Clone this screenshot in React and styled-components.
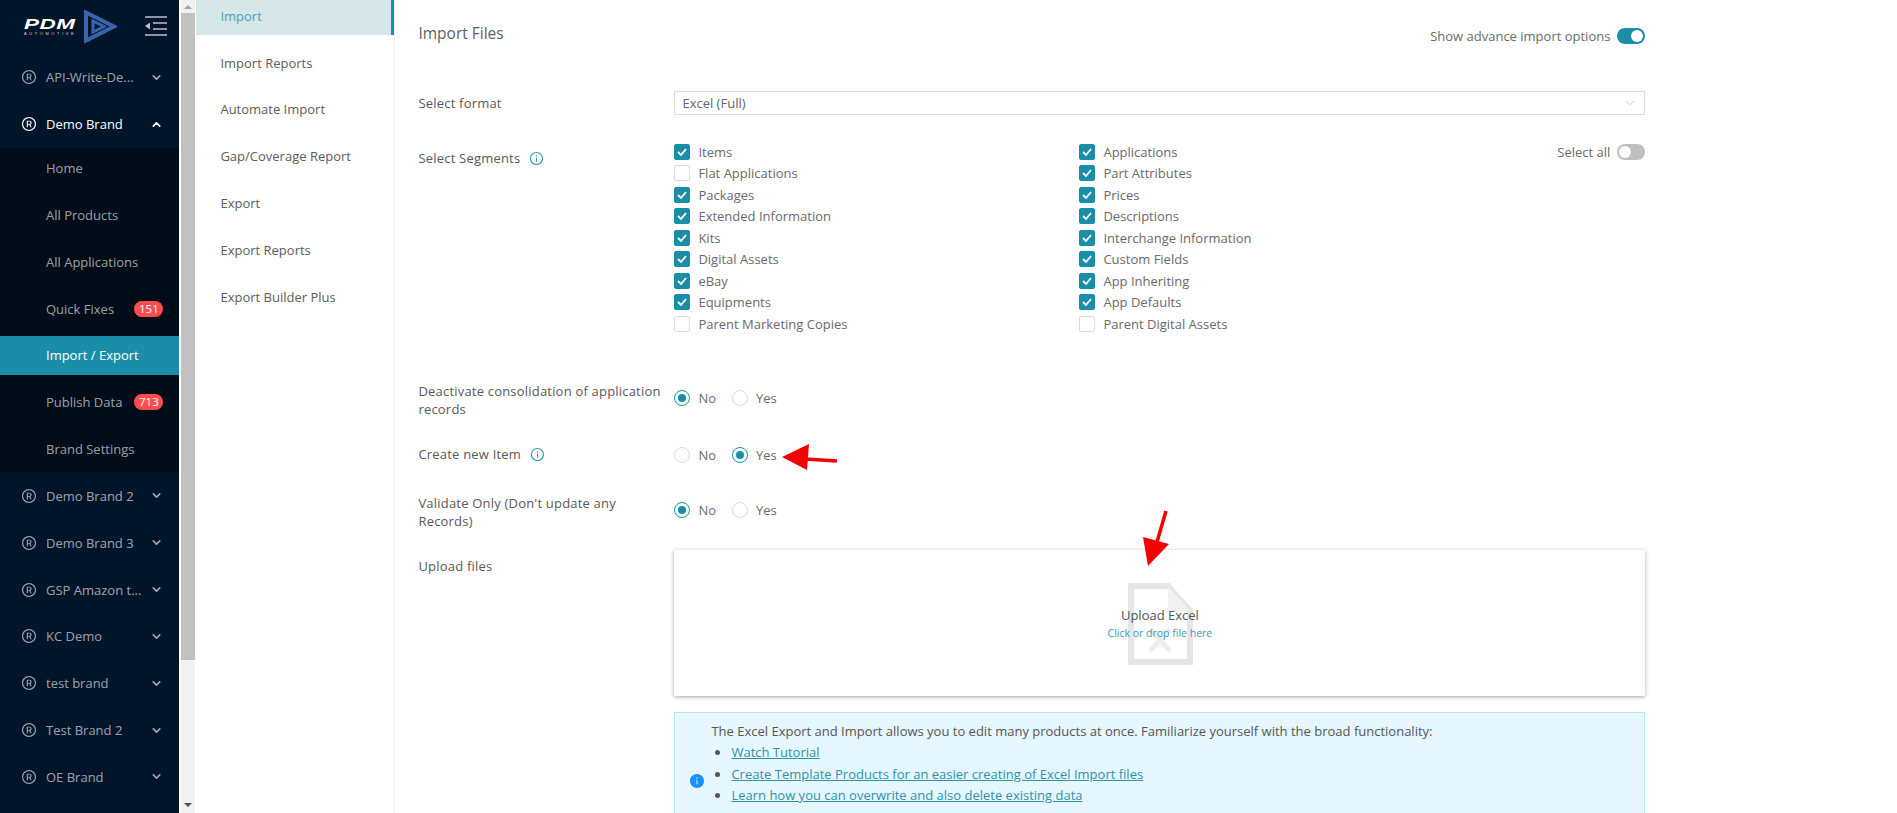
import React from 'react';
import styled, { createGlobalStyle } from 'styled-components';
import { AiOutlineTrademark, AiOutlineInfoCircle, AiFillInfoCircle } from 'react-icons/ai';
import { ChevronDown, ChevronUp } from 'lucide-react';

const TEAL = '#1a8ea8';

const brandsBefore = ['API-Write-De...'];
const brandsAfter = ['Demo Brand 2', 'Demo Brand 3', 'GSP Amazon t...', 'KC Demo', 'test brand', 'Test Brand 2', 'OE Brand'];
const subItems = [
  { label: 'Home' },
  { label: 'All Products' },
  { label: 'All Applications' },
  { label: 'Quick Fixes', badge: 151 },
  { label: 'Import / Export', active: true },
  { label: 'Publish Data', badge: 713 },
  { label: 'Brand Settings' },
];
const sections = ['Import', 'Import Reports', 'Automate Import', 'Gap/Coverage Report', 'Export', 'Export Reports', 'Export Builder Plus'];
const segments = [
  ['Items', true], ['Applications', true],
  ['Flat Applications', false], ['Part Attributes', true],
  ['Packages', true], ['Prices', true],
  ['Extended Information', true], ['Descriptions', true],
  ['Kits', true], ['Interchange Information', true],
  ['Digital Assets', true], ['Custom Fields', true],
  ['eBay', true], ['App Inheriting', true],
  ['Equipments', true], ['App Defaults', true],
  ['Parent Marketing Copies', false], ['Parent Digital Assets', false],
];

function BrandRow({ name, open }) {
  return (
    <BrandItem $open={open}>
      <AiOutlineTrademark size={16} />
      <BrandName>{name}</BrandName>
      {open ? <ChevronUp size={13} strokeWidth={3} /> : <ChevronDown size={13} strokeWidth={3} />}
    </BrandItem>
  );
}

function Check({ on, label }) {
  return (
    <CheckRow>
      <CheckBox $on={on}>
        {on && (
          <svg width="10" height="8" viewBox="0 0 10 8">
            <path d="M1 4l3 3 5-6" fill="none" stroke="#fff" strokeWidth="1.8" />
          </svg>
        )}
      </CheckBox>
      {label}
    </CheckRow>
  );
}

function YesNo({ value, top }) {
  return (
    <RadioGroup $top={top}>
      <RadioLabel>
        <Radio $on={value === 'No'} />
        No
      </RadioLabel>
      <RadioLabel>
        <Radio $on={value === 'Yes'} />
        Yes
      </RadioLabel>
    </RadioGroup>
  );
}

export default function App() {
  return (
    <Page>
      <GlobalStyle />
      <Sidebar>
        <LogoBar>
          <LogoWord>
            <LogoName>PDM</LogoName>
            <LogoSub>AUTOMOTIVE</LogoSub>
          </LogoWord>
          <svg width="33" height="33" viewBox="0 0 33 33">
            <path d="M2 2.5l28 14L2 30.5z" fill="none" stroke="#3a63ad" strokeWidth="4" />
            <path d="M9 11l11 5.5L9 22z" fill="none" stroke="#3a63ad" strokeWidth="3" />
            <path d="M2 31l12-6" stroke="#3a63ad" strokeWidth="3" />
          </svg>
          <Collapse>
            <svg width="22" height="20" viewBox="0 0 22 20">
              <path d="M0 1h22M8 7h14M8 13h14M0 19h22" stroke="#b9c0c7" strokeWidth="1.6" />
              <path d="M5 6.5v7L0 10z" fill="#b9c0c7" />
            </svg>
          </Collapse>
        </LogoBar>
        {brandsBefore.map((name) => (
          <BrandRow key={name} name={name} />
        ))}
        <BrandRow name="Demo Brand" open />
        <SubMenu>
          {subItems.map((item) => (
            <SubRow key={item.label}>
              <SubItem $active={item.active}>
                <span>{item.label}</span>
                {item.badge && <Badge>{item.badge}</Badge>}
              </SubItem>
            </SubRow>
          ))}
        </SubMenu>
        {brandsAfter.map((name) => (
          <BrandRow key={name} name={name} />
        ))}
      </Sidebar>

      <ScrollRail>
        <RailArrow $up />
        <RailThumb />
        <RailSpacer />
        <RailArrow />
      </ScrollRail>

      <SectionNav>
        {sections.map((label, i) => (
          <SectionRow key={label}>
            <SectionItem $active={i === 0}>{label}</SectionItem>
          </SectionRow>
        ))}
      </SectionNav>

      <Main>
        <Header>
          <Title>Import Files</Title>
          <SwitchLabel $top={5}>
            Show advance import options
            <Switch $on />
          </SwitchLabel>
        </Header>

        <FormRow $top={40}>
          <Label $center>Select format</Label>
          <Select>
            Excel (Full)
            <ChevronDown size={14} strokeWidth={1} color="#aaa" />
          </Select>
        </FormRow>

        <FormRow $top={26}>
          <Label $pad={8}>
            Select Segments <InfoIcon size={15} />
          </Label>
          <SegmentArea>
            <SegmentGrid>
              {segments.map(([label, on]) => (
                <Check key={label} on={on} label={label} />
              ))}
            </SegmentGrid>
            <SwitchLabel $top={3}>
              Select all
              <Switch />
            </SwitchLabel>
          </SegmentArea>
        </FormRow>

        <FormRow $top={47.5}>
          <Label>Deactivate consolidation of application records</Label>
          <YesNo value="No" top={7.5} />
        </FormRow>

        <FormRow $top={27}>
          <Label>
            Create new Item <InfoIcon size={15} />
          </Label>
          <YesNo value="Yes" top={2} />
        </FormRow>

        <FormRow $top={31}>
          <Label>Validate Only (Don't update any Records)</Label>
          <YesNo value="No" top={8} />
        </FormRow>

        <FormRow $top={20}>
          <Label $pad={7}>Upload files</Label>
          <div>
            <DropZone>
              <FileGhost width="65" height="82" viewBox="0 0 65 82">
                <path d="M3 3h37l22 25v51H3z" fill="none" stroke="#e6e6e6" strokeWidth="6" />
                <path d="M40 3l22 25H40z" fill="#f1f1f1" />
                <path d="M22 46l20 22M42 46L22 68" stroke="#ececec" strokeWidth="5" />
              </FileGhost>
              <DropTitle>Upload Excel</DropTitle>
              <DropHint>Click or drop file here</DropHint>
            </DropZone>
            <InfoBox>
              <AiFillInfoCircle size={16} color="#1890ff" />
              <InfoText>
                The Excel Export and Import allows you to edit many products at once. Familiarize yourself with the broad functionality:
                <InfoList>
                  <li><InfoLink>Watch Tutorial</InfoLink></li>
                  <li><InfoLink>Create Template Products for an easier creating of Excel Import files</InfoLink></li>
                  <li><InfoLink>Learn how you can overwrite and also delete existing data</InfoLink></li>
                </InfoList>
              </InfoText>
            </InfoBox>
          </div>
        </FormRow>
      </Main>

      {/* annotation arrows pasted on top of the screenshot */}
      <Arrows width="1897" height="813" viewBox="0 0 1897 813">
        <path d="M837 461l-32-2" stroke="#f40000" strokeWidth="3.5" fill="none" />
        <path d="M782 457l27-13-2 26z" fill="#f40000" />
        <path d="M1166 511l-9 31" stroke="#f40000" strokeWidth="3.5" fill="none" />
        <path d="M1148 566l-5-29 26 7z" fill="#f40000" />
      </Arrows>
    </Page>
  );
}

const GlobalStyle = createGlobalStyle`
  html, body {
    margin: 0;
    padding: 0;
    background: #fff;
    overflow: hidden;
  }
  * {
    box-sizing: border-box;
  }
`;

const Page = styled.div`
  position: relative;
  display: flex;
  width: 1897px;
  height: 813px;
  overflow: hidden;
  font-family: "Open Sans", "Noto Sans", sans-serif;
  font-size: 13px;
  color: #595959;
`;

const Sidebar = styled.aside`
  flex: 0 0 179px;
  background: #001529;
  color: rgba(255, 255, 255, 0.62);
`;

const LogoBar = styled.div`
  display: flex;
  align-items: center;
  height: 54px;
  padding: 0 0 2px 24px;
`;

const LogoWord = styled.div`
  display: flex;
  flex-direction: column;
  width: 59px;
  margin-right: 1px;
`;

const LogoName = styled.span`
  font-family: "Liberation Sans", sans-serif;
  font-style: italic;
  font-weight: 700;
  font-size: 15px;
  line-height: 14px;
  letter-spacing: 0.3px;
  color: #fff;
  transform: scaleX(1.5);
  transform-origin: left;
`;

const LogoSub = styled.span`
  font-family: "Liberation Sans", sans-serif;
  font-size: 4px;
  line-height: 5px;
  letter-spacing: 2.6px;
  white-space: nowrap;
  color: #d6dbe0;
`;

const Collapse = styled.div`
  display: flex;
  margin-left: 28px;
`;

const BrandItem = styled.div`
  display: flex;
  align-items: center;
  gap: 9px;
  height: 46.83px;
  padding: 0 16px 0 21px;
  color: ${(props) => (props.$open ? '#fff' : 'inherit')};
`;

const BrandName = styled.span`
  flex: 1;
  white-space: nowrap;
`;

const SubMenu = styled.div`
  display: flow-root;
  background: #000c17;
  & > :first-child {
    margin-top: -3px;
  }
`;

const SubRow = styled.div`
  display: flex;
  align-items: center;
  height: 46.83px;
`;

const SubItem = styled.div`
  display: flex;
  align-items: center;
  justify-content: space-between;
  width: 100%;
  height: 39px;
  padding: 0 16px 0 46px;
  background: ${(props) => (props.$active ? TEAL : 'transparent')};
  color: ${(props) => (props.$active ? '#fff' : 'inherit')};
`;

const Badge = styled.span`
  width: 29px;
  height: 16px;
  border-radius: 8px;
  background: #ff4d4f;
  color: #fff;
  font-size: 11.5px;
  line-height: 16px;
  text-align: center;
`;

const ScrollRail = styled.div`
  display: flex;
  flex-direction: column;
  flex: 0 0 14px;
  margin-left: 2px;
  background: #f1f1f1;
`;

const RailArrow = styled.div`
  display: flex;
  justify-content: center;
  align-items: center;
  height: ${(props) => (props.$up ? 13 : 17)}px;
  &::after {
    content: '';
    border-left: 4px solid transparent;
    border-right: 4px solid transparent;
    ${(props) => (props.$up ? 'border-bottom: 4px solid #a3a3a3;' : 'border-top: 4px solid #505050;')}
  }
`;

const RailThumb = styled.div`
  height: 647px;
  background: #c1c1c1;
`;

const RailSpacer = styled.div`
  flex: 1;
`;

const SectionNav = styled.nav`
  flex: 0 0 199px;
  margin-left: 1px;
  margin-top: -7.6px;
  border-right: 1px solid #efefef;
`;

const SectionRow = styled.div`
  display: flex;
  align-items: center;
  height: 46.83px;
`;

const SectionItem = styled.div`
  display: flex;
  align-items: center;
  width: 198px;
  height: 39px;
  padding-left: 24px;
  background: ${(props) => (props.$active ? '#d6e6e9' : 'transparent')};
  border-right: 3px solid ${(props) => (props.$active ? TEAL : 'transparent')};
  color: ${(props) => (props.$active ? '#4aa3b8' : '#5c5c5c')};
`;

const Main = styled.main`
  width: 1250px;
  padding: 0 0 0 23px;
`;

const Header = styled.div`
  display: flex;
  justify-content: space-between;
  width: 1227px;
  height: 51px;
  padding-top: 23px;
`;

const Title = styled.h1`
  margin: 0;
  font-size: 15.5px;
  font-weight: 500;
  line-height: 20px;
  color: #5f5f5f;
`;

const SwitchLabel = styled.div`
  display: flex;
  align-items: center;
  gap: 7px;
  height: 16px;
  margin-top: ${(props) => props.$top}px;
  color: #6a6a6a;
`;

const Switch = styled.span`
  display: flex;
  justify-content: ${(props) => (props.$on ? 'flex-end' : 'flex-start')};
  width: 28px;
  height: 16px;
  padding: 2px;
  border-radius: 8px;
  background: ${(props) => (props.$on ? TEAL : '#bfbfbf')};
  &::after {
    content: '';
    width: 12px;
    height: 12px;
    border-radius: 50%;
    background: #fff;
  }
`;

const FormRow = styled.div`
  display: grid;
  grid-template-columns: 256px 971px;
  margin-top: ${(props) => props.$top}px;
`;

const Label = styled.div`
  display: ${(props) => (props.$center ? 'flex' : 'block')};
  align-items: center;
  width: 250px;
  padding-top: ${(props) => props.$pad || 0}px;
  font-weight: 500;
  letter-spacing: 0.2px;
  line-height: 18px;
  color: #595959;
`;

const InfoIcon = styled(AiOutlineInfoCircle)`
  margin-left: 5px;
  vertical-align: -3px;
  color: #2f9ab2;
`;

const Select = styled.div`
  display: flex;
  align-items: center;
  justify-content: space-between;
  height: 24px;
  padding: 0 7px 0 7px;
  border: 1px solid #dcdcdc;
  color: #666;
`;

const SegmentArea = styled.div`
  display: flex;
  justify-content: space-between;
  align-items: flex-start;
`;

const SegmentGrid = styled.div`
  display: grid;
  grid-template-columns: 405px 240px;
  grid-auto-rows: 21.5px;
`;

const CheckRow = styled.div`
  display: flex;
  align-items: center;
  gap: 8px;
  color: #6a6a6a;
`;

const CheckBox = styled.span`
  display: flex;
  align-items: center;
  justify-content: center;
  width: 16px;
  height: 16px;
  border-radius: 2px;
  border: 1px solid ${(props) => (props.$on ? TEAL : '#dcdcdc')};
  background: ${(props) => (props.$on ? TEAL : '#fff')};
`;

const RadioGroup = styled.div`
  display: flex;
  align-items: center;
  align-self: start;
  gap: 16px;
  height: 16px;
  margin-top: ${(props) => props.$top}px;
`;

const RadioLabel = styled.span`
  display: flex;
  align-items: center;
  gap: 8px;
  color: #6a6a6a;
`;

const Radio = styled.span`
  display: flex;
  align-items: center;
  justify-content: center;
  width: 16px;
  height: 16px;
  border-radius: 50%;
  border: 1px solid ${(props) => (props.$on ? TEAL : '#dcdcdc')};
  &::after {
    content: '';
    width: 8px;
    height: 8px;
    border-radius: 50%;
    background: ${(props) => (props.$on ? TEAL : 'transparent')};
  }
`;

const DropZone = styled.div`
  position: relative;
  display: flex;
  flex-direction: column;
  align-items: center;
  justify-content: center;
  height: 146px;
  padding-top: 1px;
  box-shadow: 0 1px 4px rgba(0, 0, 0, 0.35);
`;

const FileGhost = styled.svg`
  position: absolute;
  top: 33px;
  left: 454px;
`;

const DropTitle = styled.span`
  position: relative;
  color: #555;
  line-height: 19px;
`;

const DropHint = styled.span`
  position: relative;
  font-size: 10.5px;
  line-height: 16px;
  color: #3a9db4;
`;

const InfoBox = styled.div`
  display: flex;
  align-items: center;
  gap: 6px;
  height: 138px;
  margin-top: 16px;
  padding: 0 14px;
  border: 1px solid #b6e3f5;
  background: #e6f7ff;
`;

const InfoText = styled.div`
  align-self: flex-start;
  padding-top: 8px;
  line-height: 21.4px;
  color: #555;
`;

const InfoList = styled.ul`
  margin: 0;
  padding-left: 20px;
`;

const InfoLink = styled.a`
  color: #2b93aa;
  text-decoration: underline;
`;

const Arrows = styled.svg`
  position: absolute;
  top: 0;
  left: 0;
  pointer-events: none;
`;
